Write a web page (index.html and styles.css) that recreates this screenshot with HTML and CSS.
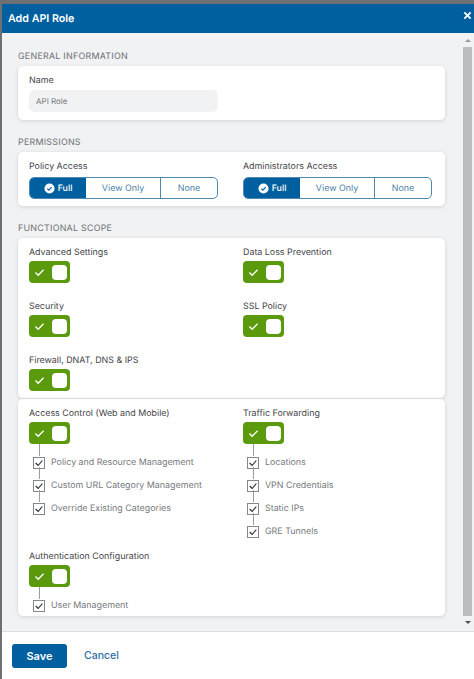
FILE: index.html
```html
<!DOCTYPE html>
<html lang="en">
<head>
<meta charset="utf-8">
<title>Add API Role</title>
<link rel="stylesheet" href="styles.css">
</head>
<body>
<div class="modal">
  <header class="modal-header">
    <h1>Add API Role</h1>
    <svg class="close" viewBox="0 0 10 10" width="9" height="9"><path d="M1.5 1.5l7 7M8.5 1.5l-7 7"/></svg>
  </header>
  <div class="modal-body">
    <main class="content">
      <h2 class="section first">GENERAL INFORMATION</h2>
      <section class="card card-name">
        <div class="label">Name</div>
        <div class="input">API Role</div>
      </section>

      <h2 class="section">PERMISSIONS</h2>
      <section class="card grid card-perm">
        <div>
          <div class="label">Policy Access</div>
          <div class="segment">
            <span class="seg seg-full active"><svg viewBox="0 0 12 12" width="11" height="11"><circle cx="6" cy="6" r="5.5" fill="#fff"/><path d="M3.6 6.2l1.7 1.6 3.1-3.3" fill="none" stroke="#00609f" stroke-width="1.3"/></svg>Full</span>
            <span class="seg seg-view">View Only</span>
            <span class="seg seg-none">None</span>
          </div>
        </div>
        <div>
          <div class="label">Administrators Access</div>
          <div class="segment">
            <span class="seg seg-full active"><svg viewBox="0 0 12 12" width="11" height="11"><circle cx="6" cy="6" r="5.5" fill="#fff"/><path d="M3.6 6.2l1.7 1.6 3.1-3.3" fill="none" stroke="#00609f" stroke-width="1.3"/></svg>Full</span>
            <span class="seg seg-view">View Only</span>
            <span class="seg seg-none">None</span>
          </div>
        </div>
      </section>

      <h2 class="section">FUNCTIONAL SCOPE</h2>
      <section class="card grid card-scope">
        <div class="item"><div class="label">Advanced Settings</div><div class="toggle"><svg viewBox="0 0 12 10" width="11" height="9"><path d="M1.5 5l3 3 6-6"/></svg><span class="knob"></span></div></div>
        <div class="item"><div class="label">Data Loss Prevention</div><div class="toggle"><svg viewBox="0 0 12 10" width="11" height="9"><path d="M1.5 5l3 3 6-6"/></svg><span class="knob"></span></div></div>
        <div class="item"><div class="label">Security</div><div class="toggle"><svg viewBox="0 0 12 10" width="11" height="9"><path d="M1.5 5l3 3 6-6"/></svg><span class="knob"></span></div></div>
        <div class="item"><div class="label">SSL Policy</div><div class="toggle"><svg viewBox="0 0 12 10" width="11" height="9"><path d="M1.5 5l3 3 6-6"/></svg><span class="knob"></span></div></div>
        <div class="item"><div class="label">Firewall, DNAT, DNS &amp; IPS</div><div class="toggle"><svg viewBox="0 0 12 10" width="11" height="9"><path d="M1.5 5l3 3 6-6"/></svg><span class="knob"></span></div></div>
      </section>

      <section class="card grid card-sub">
        <div class="item">
          <div class="label">Access Control (Web and Mobile)</div>
          <div class="toggle"><svg viewBox="0 0 12 10" width="11" height="9"><path d="M1.5 5l3 3 6-6"/></svg><span class="knob"></span></div>
          <ul class="checks">
            <li><span class="box"><svg viewBox="0 0 12 12" width="10" height="10"><path d="M2 6l3 3 5-6"/></svg></span>Policy and Resource Management</li>
            <li><span class="box"><svg viewBox="0 0 12 12" width="10" height="10"><path d="M2 6l3 3 5-6"/></svg></span>Custom URL Category Management</li>
            <li><span class="box"><svg viewBox="0 0 12 12" width="10" height="10"><path d="M2 6l3 3 5-6"/></svg></span>Override Existing Categories</li>
          </ul>
        </div>
        <div class="item">
          <div class="label">Traffic Forwarding</div>
          <div class="toggle"><svg viewBox="0 0 12 10" width="11" height="9"><path d="M1.5 5l3 3 6-6"/></svg><span class="knob"></span></div>
          <ul class="checks">
            <li><span class="box"><svg viewBox="0 0 12 12" width="10" height="10"><path d="M2 6l3 3 5-6"/></svg></span>Locations</li>
            <li><span class="box"><svg viewBox="0 0 12 12" width="10" height="10"><path d="M2 6l3 3 5-6"/></svg></span>VPN Credentials</li>
            <li><span class="box"><svg viewBox="0 0 12 12" width="10" height="10"><path d="M2 6l3 3 5-6"/></svg></span>Static IPs</li>
            <li><span class="box"><svg viewBox="0 0 12 12" width="10" height="10"><path d="M2 6l3 3 5-6"/></svg></span>GRE Tunnels</li>
          </ul>
        </div>
        <div class="item">
          <div class="label">Authentication Configuration</div>
          <div class="toggle"><svg viewBox="0 0 12 10" width="11" height="9"><path d="M1.5 5l3 3 6-6"/></svg><span class="knob"></span></div>
          <ul class="checks">
            <li><span class="box"><svg viewBox="0 0 12 12" width="10" height="10"><path d="M2 6l3 3 5-6"/></svg></span>User Management</li>
          </ul>
        </div>
      </section>
    </main>
    <div class="scrollbar">
      <span class="arrow up"></span>
      <span class="thumb"></span>
      <span class="arrow down"></span>
    </div>
  </div>
  <footer class="modal-footer">
    <button class="btn-save" type="button">Save</button>
    <button class="btn-cancel" type="button">Cancel</button>
  </footer>
</div>
</body>
</html>
```

FILE: styles.css
```css
* { box-sizing: border-box; }
html, body { margin: 0; height: 100%; }
body {
  background: #6f7072;
  padding: 4px 0 0 2px;
  font-family: Inter, "Liberation Sans", sans-serif;
  font-size: 8.9px;
  color: #3f4448;
  overflow: hidden;
  text-rendering: geometricPrecision;
}
.modal {
  height: 675px;
  display: flex;
  flex-direction: column;
  background: #fff;
}
.modal-header {
  height: 29px;
  flex: none;
  background: #00609f;
  color: #fff;
  display: flex;
  justify-content: space-between;
  padding: 0 2px 0 6px;
}
.modal-header h1 {
  margin: 0;
  font-size: 10.7px;
  font-weight: 600;
  line-height: 29px;
}
.close { margin-top: 7px; }
.close path { stroke: #fff; stroke-width: 2; fill: none; }

.modal-body {
  flex: none;
  height: 599px;
  background: #f1f2f3;
  border-bottom: 1px solid #dcdee0;
  display: flex;
}
.content {
  width: 443px;
  padding-left: 16px;
  flex: none;
}
.section {
  margin: 0;
  height: 32px;
  padding-top: 17px;
  font-size: 8.9px;
  font-weight: 400;
  line-height: 12px;
  letter-spacing: .25px;
  color: #6c7075;
  white-space: nowrap;
}
.section.first { height: 33px; padding-top: 18px; }
.card {
  background: #fff;
  border-radius: 5px;
  box-shadow: 0 1px 4px rgba(0,0,0,.13);
  padding-left: 11px;
}
.card-name { height: 54px; padding-top: 9px; }
.grid {
  display: grid;
  grid-template-columns: 214px 1fr;
}
.card-perm { height: 54px; padding-top: 9px; }
.card-scope { height: 160px; padding-top: 9px; row-gap: 0; grid-auto-rows: 54px; }
.card-sub { height: 217px; margin-top: 1px; padding-top: 9px; grid-template-rows: 143px auto; }
.label {
  line-height: 12px;
  height: 12px;
  color: #3f4448;
  white-space: nowrap;
}
.input {
  width: 189px;
  height: 22px;
  margin-top: 3px;
  padding-left: 7px;
  border-radius: 6px;
  background: #f1f2f3;
  color: #75797d;
  font-size: 8px;
  line-height: 22px;
}
.segment {
  width: 189px;
  height: 22px;
  margin-top: 4px;
  display: flex;
  border: 1px solid #4d89b3;
  border-radius: 5px;
  overflow: hidden;
  color: #4d7fa6;
}
.seg {
  display: flex;
  align-items: center;
  justify-content: center;
  gap: 3px;
  font-size: 8.9px;
  white-space: nowrap;
}
.seg-full { width: 56px; }
.seg-view { width: 75px; border-right: 1px solid #4d89b3; }
.seg-none { flex: 1; }
.seg.active { background: #00609f; color: #fff; font-weight: 500; }

.toggle {
  width: 41px;
  height: 22px;
  margin-top: 2px;
  background: #5a9a0c;
  border-radius: 4px;
  display: flex;
  align-items: center;
  justify-content: space-between;
  padding: 0 3px 0 5px;
}
.toggle svg path { fill: none; stroke: #fff; stroke-width: 1.5; }
.knob {
  width: 15px;
  height: 15px;
  border-radius: 4px;
  background: #fff;
}
.checks {
  list-style: none;
  margin: 7px 0 0;
  padding: 0 0 0 4px;
  color: #75797d;
}
.checks li {
  position: relative;
  height: 23px;
  display: flex;
  align-items: center;
  gap: 6px;
  white-space: nowrap;
}
.checks li::before {
  content: "";
  position: absolute;
  left: 6px;
  top: -7px;
  width: 1px;
  height: 12px;
  background: #9a9da0;
}
.box {
  width: 12px;
  height: 12px;
  flex: none;
  border: 1px solid #85888b;
  background: #fff;
  display: flex;
  align-items: center;
  justify-content: center;
}
.box svg path { fill: none; stroke: #2b2e31; stroke-width: 1.4; }

.scrollbar {
  width: 9px;
  margin-left: 18px;
  display: flex;
  flex-direction: column;
  align-items: center;
}
.thumb {
  width: 9px;
  height: 569px;
  background: #bcbdbe;
}
.arrow {
  width: 0;
  height: 0;
  border-left: 3px solid transparent;
  border-right: 3px solid transparent;
}
.arrow.up { border-bottom: 3px solid #9a9a9a; margin: 6px 0 5px; }
.arrow.down { border-top: 3px solid #505050; margin-top: 5px; }

.modal-footer {
  flex: 1;
  display: flex;
  align-items: center;
  padding: 0 0 0 10px;
  gap: 17px;
  background: #fff;
}
.btn-save {
  width: 55px;
  height: 24px;
  border: 0;
  border-radius: 3px;
  background: #00609f;
  color: #fff;
  font: 600 11px Inter, "Liberation Sans", sans-serif;
}
.btn-cancel {
  border: 0;
  padding: 0;
  background: none;
  color: #2a6fa3;
  font: 500 10.5px Inter, "Liberation Sans", sans-serif;
}
```
